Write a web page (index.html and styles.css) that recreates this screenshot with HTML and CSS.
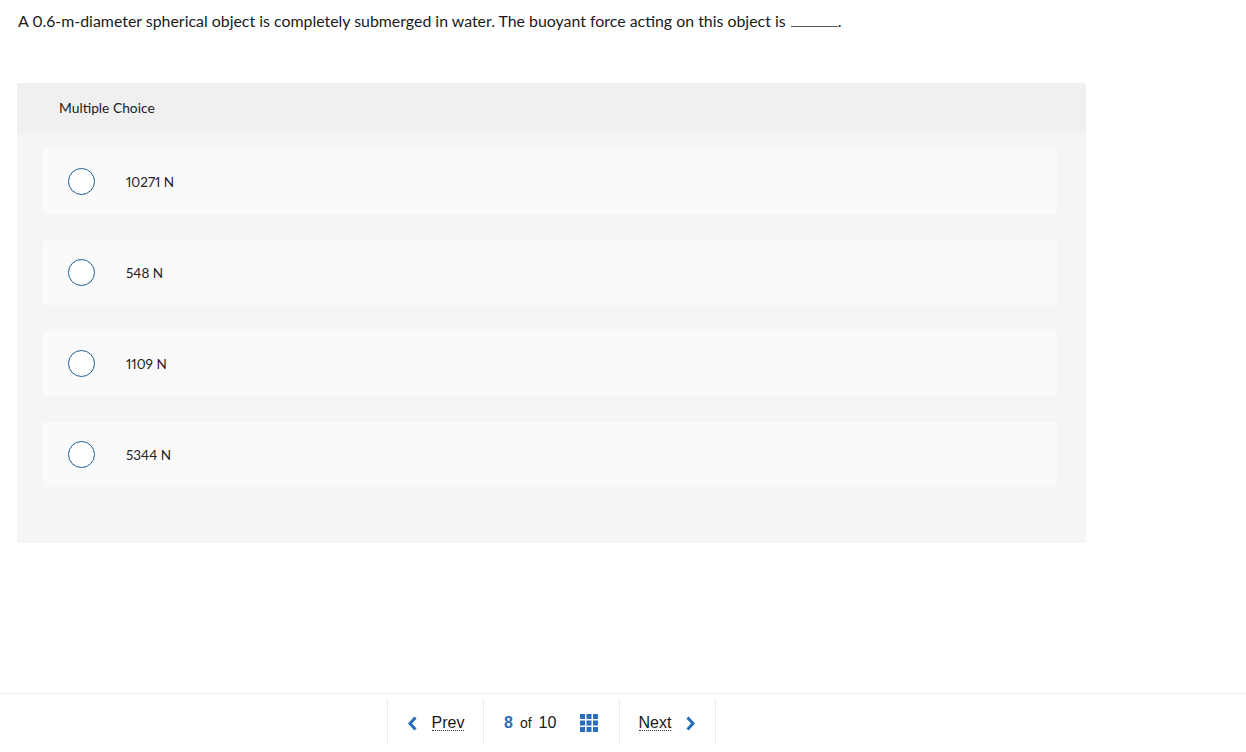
FILE: index.html
```html
<!DOCTYPE html>
<html lang="en">
<head>
    <meta charset="UTF-8">
    <meta name="viewport" content="width=device-width, initial-scale=1.0">
    <title>Question 8</title>
    <link rel="stylesheet" href="styles.css">
</head>
<body>
    <!-- Question -->
    <main class="question">
        <p class="prompt">A 0.6-m-diameter spherical object is completely submerged in water. The buoyant force acting on this object is <span class="blank"></span>.</p>

        <!-- Answer card -->
        <section class="card">
            <div class="card-head">Multiple Choice</div>
            <div class="card-body">
                <label class="choice"><span class="radio"></span><span class="choice-text">10271 N</span></label>
                <label class="choice"><span class="radio"></span><span class="choice-text">548 N</span></label>
                <label class="choice"><span class="radio"></span><span class="choice-text">1109 N</span></label>
                <label class="choice"><span class="radio"></span><span class="choice-text">5344 N</span></label>
            </div>
        </section>
    </main>

    <!-- Footer navigation -->
    <footer class="footer">
        <nav class="pager">
            <a href="#" class="pager-link">
                <svg class="chev" width="11" height="15" viewBox="0 0 11 15"><path d="M8.5 1.5 L3 7.5 L8.5 13.5" fill="none" stroke="#2a6ebb" stroke-width="3"/></svg>
                <span class="dotted">Prev</span>
            </a>
            <div class="pager-count">
                <span class="current">8</span>
                <span class="of">of</span>
                <span>10</span>
                <svg class="grid" width="18" height="18" viewBox="0 0 18 18" fill="#2a6ebb">
                    <rect x="0" y="0" width="5" height="5"/><rect x="6.5" y="0" width="5" height="5"/><rect x="13" y="0" width="5" height="5"/>
                    <rect x="0" y="6.5" width="5" height="5"/><rect x="6.5" y="6.5" width="5" height="5"/><rect x="13" y="6.5" width="5" height="5"/>
                    <rect x="0" y="13" width="5" height="5"/><rect x="6.5" y="13" width="5" height="5"/><rect x="13" y="13" width="5" height="5"/>
                </svg>
            </div>
            <a href="#" class="pager-link">
                <span class="dotted">Next</span>
                <svg class="chev" width="11" height="15" viewBox="0 0 11 15"><path d="M2.5 1.5 L8 7.5 L2.5 13.5" fill="none" stroke="#2a6ebb" stroke-width="3"/></svg>
            </a>
        </nav>
    </footer>
</body>
</html>
```

FILE: styles.css
```css
body {
    margin: 0;
    padding: 0;
    background-color: #fff;
    font-family: "Lato", "Open Sans", Arial, sans-serif;
    font-variant-numeric: proportional-nums;
    color: #1a1a1a;
}

/* Question */
.question {
    padding: 0 17px;
    height: 693px;
}

.prompt {
    margin: 0;
    padding: 11px 0 0 1px;
    font-size: 15.9px;
    line-height: 20px;
}

.blank {
    display: inline-block;
    width: 47px;
    border-bottom: 1px solid #555;
    margin-left: 1px;
}

/* Card */
.card {
    margin-top: 52px;
    width: 1069px;
    background-color: #f5f5f5;
    border-radius: 3px;
    overflow: hidden;
}

.card-head {
    background-color: #f0f0f0;
    height: 50px;
    line-height: 50px;
    padding-left: 42px;
    font-size: 13.8px;
    color: #222;
}

.card-body {
    display: flex;
    flex-direction: column;
    gap: 26px;
    padding: 16px 29px 56px 26px;
}

.choice {
    display: flex;
    align-items: center;
    height: 65px;
    background-color: #fafafa;
    border-radius: 3px;
    padding-left: 25px;
    font-size: 13.5px;
    color: #222;
    cursor: pointer;
}

.radio {
    width: 25px;
    height: 25px;
    border: 1.5px solid #1d5b94;
    border-radius: 50%;
    background-color: #fff;
    flex-shrink: 0;
}

.choice-text {
    margin-left: 31px;
}

/* Footer */
.footer {
    border-top: 1px solid #ececec;
    height: 58px;
    padding-top: 5px;
    box-sizing: border-box;
}

.pager {
    display: flex;
    margin-left: 387px;
    height: 45px;
    padding-top: 3px;
    box-sizing: border-box;
    font-family: "Liberation Sans", Arial, sans-serif;
    font-size: 16px;
    color: #1a1a1a;
}

.pager > * {
    border-left: 1px solid #ececec;
    display: flex;
    align-items: center;
    margin-top: -3px;
    padding-top: 3px;
}

.pager > *:last-child {
    border-right: 1px solid #ececec;
}

.pager-link {
    width: 95px;
    justify-content: center;
    gap: 14px;
    text-decoration: none;
    color: #1a1a1a;
}

.dotted {
    border-bottom: 1px dotted #333;
    line-height: 15px;
}

.pager-count {
    width: 136px;
    padding-left: 20px;
    box-sizing: border-box;
}

.current {
    color: #2a6ebb;
    font-weight: bold;
}

.of {
    font-size: 14px;
    margin: 0 7px 0 7px;
}

.grid {
    margin-left: 24px;
}
```
